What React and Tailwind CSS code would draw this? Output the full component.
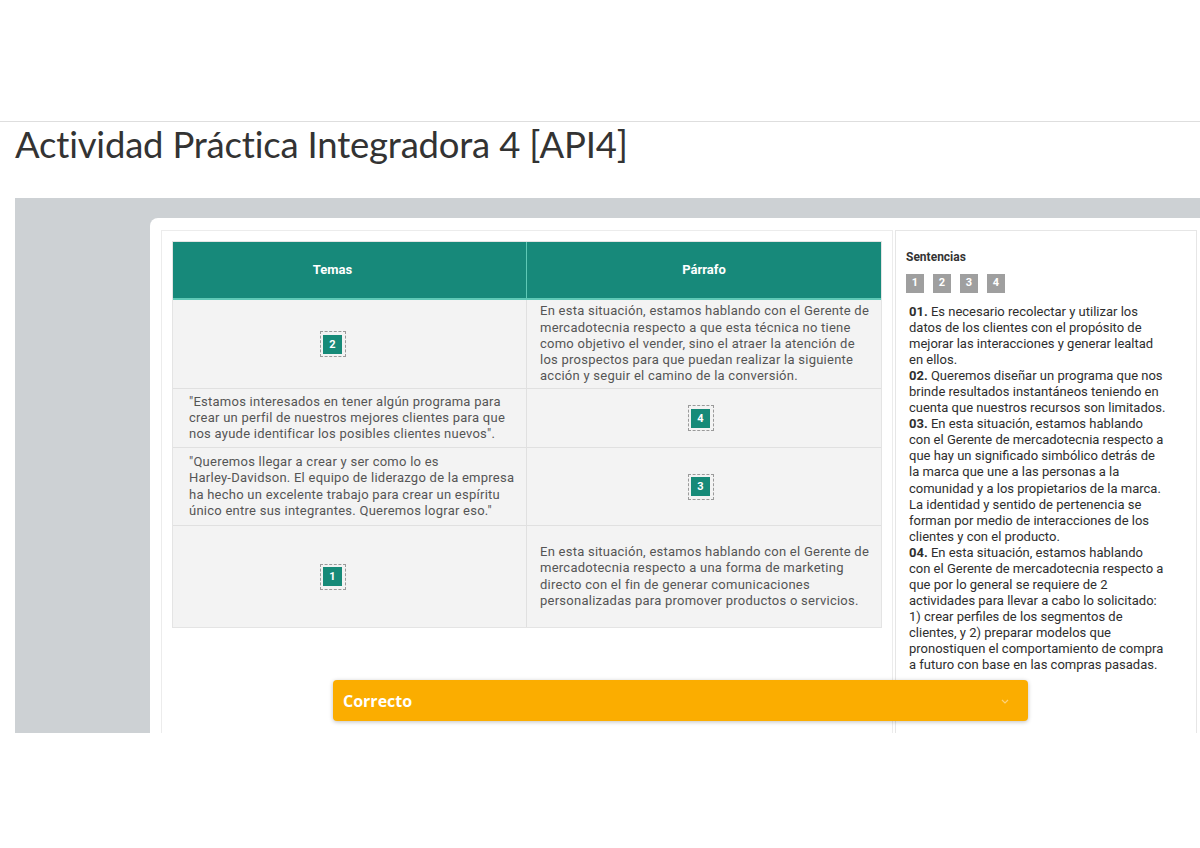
const rows = [
  {
    left: { badge: '2' },
    right: {
      lines: [
        'En esta situación, estamos hablando con el Gerente de',
        'mercadotecnia respecto a que esta técnica no tiene',
        'como objetivo el vender, sino el atraer la atención de',
        'los prospectos para que puedan realizar la siguiente',
        'acción y seguir el camino de la conversión.',
      ],
    },
    h: 'h-[89px]',
  },
  {
    left: {
      lines: [
        '"Estamos interesados en tener algún programa para',
        'crear un perfil de nuestros mejores clientes para que',
        'nos ayude identificar los posibles clientes nuevos".',
      ],
    },
    right: { badge: '4' },
    h: 'h-[59px]',
  },
  {
    left: {
      lines: [
        '"Queremos llegar a crear y ser como lo es',
        'Harley-Davidson. El equipo de liderazgo de la empresa',
        'ha hecho un excelente trabajo para crear un espíritu',
        'único entre sus integrantes. Queremos lograr eso."',
      ],
    },
    right: { badge: '3' },
    h: 'h-[78px]',
  },
  {
    left: { badge: '1' },
    right: {
      lines: [
        'En esta situación, estamos hablando con el Gerente de',
        'mercadotecnia respecto a una forma de marketing',
        'directo con el fin de generar comunicaciones',
        'personalizadas para promover productos o servicios.',
      ],
    },
    h: 'h-[101px]',
  },
];

const sentences = [
  ['01.', [' Es necesario recolectar y utilizar los', 'datos de los clientes con el propósito de', 'mejorar las interacciones y generar lealtad', 'en ellos.']],
  ['02.', [' Queremos diseñar un programa que nos', 'brinde resultados instantáneos teniendo en', 'cuenta que nuestros recursos son limitados.']],
  ['03.', [' En esta situación, estamos hablando', 'con el Gerente de mercadotecnia respecto a', 'que hay un significado simbólico detrás de', 'la marca que une a las personas a la', 'comunidad y a los propietarios de la marca.', 'La identidad y sentido de pertenencia se', 'forman por medio de interacciones de los', 'clientes y con el producto.']],
  ['04.', [' En esta situación, estamos hablando', 'con el Gerente de mercadotecnia respecto a', 'que por lo general se requiere de 2', 'actividades para llevar a cabo lo solicitado:', '1) crear perfiles de los segmentos de', 'clientes, y 2) preparar modelos que', 'pronostiquen el comportamiento de compra', 'a futuro con base en las compras pasadas.']],
];

const Badge = ({ n }) => (
  <div className="mx-auto w-[26px] h-[26px] border border-dashed border-[#9a9a9a] flex items-center justify-center">
    <div className="w-[19px] h-[19px] bg-[#168a78] text-white text-[11px] font-bold flex items-center justify-center leading-none">
      {n}
    </div>
  </div>
);

const Cell = ({ data, pad }) => (
  <div className={`flex items-center ${pad}`}>
    {data.badge ? (
      <Badge n={data.badge} />
    ) : (
      <div className="text-[13px] leading-[16.2px] tracking-[0.25px] text-[#555] whitespace-nowrap">
        {data.lines.map((l, i) => (
          <div key={i}>{l}</div>
        ))}
      </div>
    )}
  </div>
);

const App = () => {
  return (
    <div className="w-[1200px] h-[848px] bg-white relative overflow-hidden font-['Roboto',sans-serif]">
      <div className="h-[122px] border-b border-[#dedede]" />
      <h1 className="pl-[15px] h-[76px] text-[36.5px] leading-[44px] text-[#333] font-['Lato',sans-serif] tracking-[-0.2px]">
        Actividad Práctica Integradora 4 [API4]
      </h1>

      <div className="ml-[15px] h-[535px] bg-[#cdd1d4] pt-[20px] pl-[135px] overflow-hidden">
        <div className="bg-white rounded-tl-lg h-full flex pl-[11px] pt-[12px]">
          <div className="w-[732px] border border-b-0 border-[#ececec] p-[10px]">
            <div className="border border-[#e4e4e4]">
              <div className="grid grid-cols-2 h-[58px] bg-[#17897a] border-b-2 border-[#5fc9b6] text-white text-[13px] font-bold">
                <div className="flex items-center justify-center pr-[34px] border-r border-[#5fc9b6]">Temas</div>
                <div className="flex items-center justify-center">Párrafo</div>
              </div>
              {rows.map((r, i) => (
                <div key={i} className={`grid grid-cols-2 bg-[#f3f3f3] ${r.h} ${i < rows.length - 1 ? 'border-b border-[#e0e0e0]' : ''}`}>
                  <Cell data={r.left} pad={`pl-[16px] border-r border-[#e0e0e0] ${r.left.badge ? 'pr-[50px]' : ''}`} />
                  <Cell data={r.right} pad={`pl-[13px] ${r.right.badge ? 'pr-[20px]' : ''}`} />
                </div>
              ))}
            </div>
          </div>

          <div className="ml-[2px] w-[302px] border border-b-0 border-[#e6e6e6] pl-[10px] pt-[18px]">
            <div className="text-[12px] leading-[16px] font-bold text-[#333]">Sentencias</div>
            <div className="flex gap-[9px] mt-[9px]">
              {['1', '2', '3', '4'].map((n) => (
                <div key={n} className="w-[18px] h-[19px] bg-[#9f9f9f] text-white text-[11px] font-bold flex items-center justify-center">
                  {n}
                </div>
              ))}
            </div>
            <div className="mt-[11px] pl-[3px] text-[13px] leading-[16.05px] text-[#2e2e2e] whitespace-nowrap">
              {sentences.map(([num, lines]) =>
                lines.map((l, i) => (
                  <div key={num + i}>
                    {i === 0 && <span className="font-bold">{num}</span>}
                    {l}
                  </div>
                ))
              )}
            </div>
          </div>
        </div>
      </div>

      <div className="absolute left-[333px] top-[680px] w-[695px] h-[41px] rounded bg-[#fbad00] shadow-[0_1px_4px_rgba(0,0,0,0.25)] flex items-center justify-between px-[10px]">
        <span className="text-white text-[16px] font-bold font-['Open_Sans',sans-serif]">Correcto</span>
        <svg width="10" height="10" viewBox="0 0 10 10" className="mr-[8px]">
          <path d="M2 4l3 3 3-3" fill="none" stroke="#fdd27a" strokeWidth="1.2" />
        </svg>
      </div>
    </div>
  );
};

export default App;
